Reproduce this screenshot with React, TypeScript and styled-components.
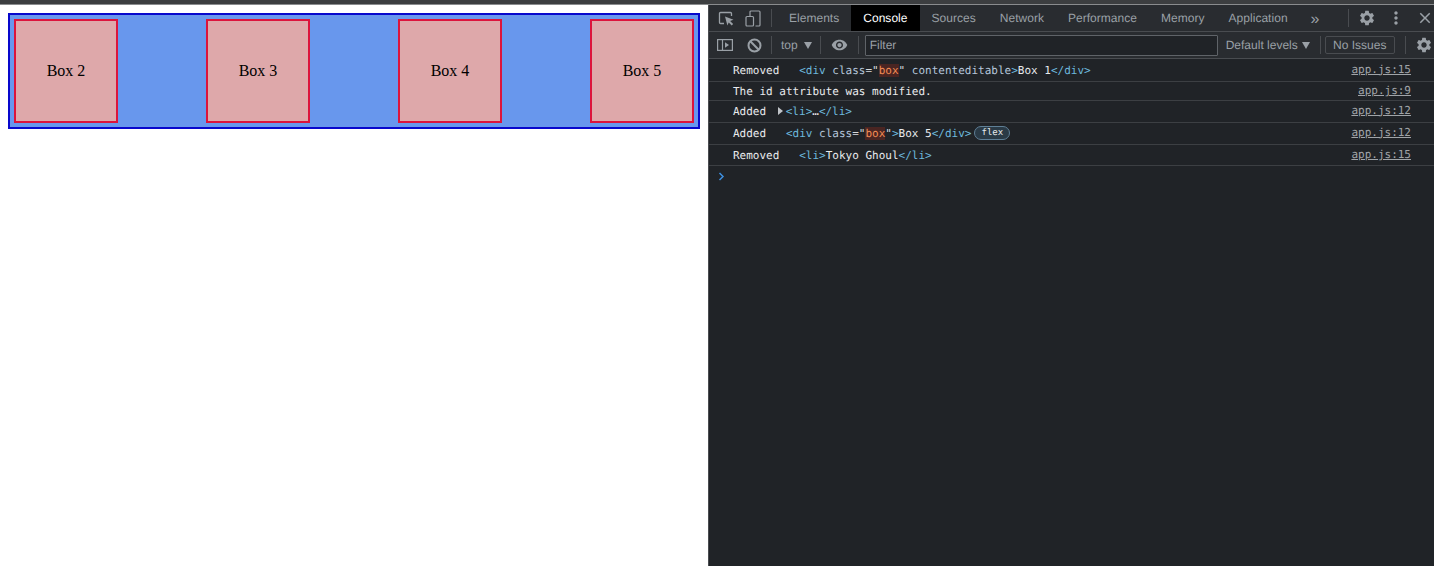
import React from 'react';
import styled, { createGlobalStyle } from 'styled-components';
import { MdClose, MdMoreVert, MdRemoveRedEye, MdSettings } from 'react-icons/md';

const GlobalStyle = createGlobalStyle`
  html, body {
    margin: 0;
    padding: 0;
    height: 100%;
    overflow: hidden;
    background: #fff;
  }
`;

const TABS = ['Elements', 'Console', 'Sources', 'Network', 'Performance', 'Memory', 'Application'];

function Tag({ name, attrs, children }: { name: string; attrs?: React.ReactNode; children?: React.ReactNode }) {
  return (
    <>
      <Styled.TagName>{`<${name}`}</Styled.TagName>
      {attrs}
      <Styled.TagName>{'>'}</Styled.TagName>
      {children}
      <Styled.TagName>{`</${name}>`}</Styled.TagName>
    </>
  );
}

const BoxAttr = () => (
  <>
    <Styled.AttrName> class</Styled.AttrName>
    <Styled.Quote>="</Styled.Quote>
    <Styled.AttrValue>box</Styled.AttrValue>
    <Styled.Quote>"</Styled.Quote>
  </>
);

export default function App() {
  return (
    <>
      <GlobalStyle />
      <Styled.Window>
        <Styled.TopStrip />
        <Styled.Main>
          <Styled.Page>
            <Styled.BoxList>
              {[2, 3, 4, 5].map((n) => (
                <Styled.Box key={n}>Box {n}</Styled.Box>
              ))}
            </Styled.BoxList>
          </Styled.Page>
          <Styled.DevTools>
            <Styled.TabBar>
              <Styled.IconButton $left={9} $width={17}>
                <svg width="17" height="16" viewBox="0 0 17 16" fill="none">
                  <path d="M6 13.5H2.5a1 1 0 0 1-1-1v-9a1 1 0 0 1 1-1h10a1 1 0 0 1 1 1V6" stroke="#9aa0a6" strokeWidth="1.3" />
                  <path d="M7 6.5l8.5 3.2-3.4 1.3 3 3-1.4 1.4-3-3-1.3 3.2z" fill="#9aa0a6" />
                </svg>
              </Styled.IconButton>
              <Styled.IconButton $left={10} $width={16}>
                <svg width="16" height="17" viewBox="0 0 16 17" fill="none" stroke="#9aa0a6" strokeWidth="1.2">
                  <path d="M5 6V2a1 1 0 0 1 1-1h8a1 1 0 0 1 1 1v13a1 1 0 0 1-1 1h-3.5" />
                  <rect x="1" y="6.5" width="7.5" height="9.5" rx="1" />
                </svg>
              </Styled.IconButton>
              <Styled.Separator $left={10} />
              <Styled.Tabs>
                {TABS.map((tab) => (
                  <Styled.Tab key={tab} $active={tab === 'Console'}>
                    {tab}
                  </Styled.Tab>
                ))}
              </Styled.Tabs>
              <Styled.MoreTabs>»</Styled.MoreTabs>
              <Styled.Separator $left={28} />
              <Styled.IconButton $left={9} $width={18}>
                <MdSettings size={18} color="#9aa0a6" />
              </Styled.IconButton>
              <Styled.IconButton $left={10} $width={20}>
                <MdMoreVert size={20} color="#9aa0a6" />
              </Styled.IconButton>
              <Styled.IconButton $left={10} $width={18}>
                <MdClose size={18} color="#9aa0a6" />
              </Styled.IconButton>
            </Styled.TabBar>

            <Styled.ToolBar>
              <Styled.IconButton $left={8} $width={16}>
                <svg width="16" height="14" viewBox="0 0 16 14" fill="none">
                  <rect x="0.6" y="1.6" width="14.8" height="10.8" stroke="#9aa0a6" strokeWidth="1.2" />
                  <path d="M5.5 2v10" stroke="#9aa0a6" strokeWidth="1.2" />
                  <path d="M8 4.2L12 7 8 9.8z" fill="#9aa0a6" />
                </svg>
              </Styled.IconButton>
              <Styled.IconButton $left={13} $width={16}>
                <svg width="15" height="15" viewBox="0 0 15 15" fill="none" stroke="#9aa0a6" strokeWidth="2">
                  <circle cx="7.5" cy="7.5" r="6" />
                  <path d="M3.3 3.3l8.4 8.4" />
                </svg>
              </Styled.IconButton>
              <Styled.Separator $left={9} />
              <Styled.ToolText $left={9}>top</Styled.ToolText>
              <Styled.Caret $left={6} />
              <Styled.Separator $left={8} />
              <Styled.IconButton $left={10} $width={17}>
                <MdRemoveRedEye size={18} color="#9aa0a6" />
              </Styled.IconButton>
              <Styled.Separator $left={10} />
              <Styled.FilterInput placeholder="Filter" readOnly />
              <Styled.ToolText $left={8}>Default levels</Styled.ToolText>
              <Styled.Caret $left={4} />
              <Styled.Separator $left={10} />
              <Styled.IssuesButton>No Issues</Styled.IssuesButton>
              <Styled.Separator $left={10} />
              <Styled.IconButton $left={9} $width={18}>
                <MdSettings size={18} color="#9aa0a6" />
              </Styled.IconButton>
            </Styled.ToolBar>

            <Styled.Row $height={23} $top={1}>
              <Styled.Message>
                {'Removed   '}
                <Tag
                  name="div"
                  attrs={
                    <>
                      <BoxAttr />
                      <Styled.AttrName> contenteditable</Styled.AttrName>
                    </>
                  }
                >
                  Box 1
                </Tag>
              </Styled.Message>
              <Styled.Source>app.js:15</Styled.Source>
            </Styled.Row>
            <Styled.Row $height={19} $top={2}>
              <Styled.Message>The id attribute was modified.</Styled.Message>
              <Styled.Source>app.js:9</Styled.Source>
            </Styled.Row>
            <Styled.Row $height={22}>
              <Styled.Message>
                {'Added '}
                <Styled.Triangle />
                <Tag name="li">…</Tag>
              </Styled.Message>
              <Styled.Source>app.js:12</Styled.Source>
            </Styled.Row>
            <Styled.Row $height={22}>
              <Styled.Message>
                {'Added   '}
                <Tag name="div" attrs={<BoxAttr />}>
                  Box 5
                </Tag>
                <Styled.FlexBadge>flex</Styled.FlexBadge>
              </Styled.Message>
              <Styled.Source>app.js:12</Styled.Source>
            </Styled.Row>
            <Styled.Row $height={21} $top={2}>
              <Styled.Message>
                {'Removed   '}
                <Tag name="li">Tokyo Ghoul</Tag>
              </Styled.Message>
              <Styled.Source>app.js:15</Styled.Source>
            </Styled.Row>
            <Styled.Prompt>
              <svg width="7" height="9" viewBox="0 0 7 9" fill="none">
                <path d="M1.5 1l3.5 3.5L1.5 8" stroke="#3d8fe0" strokeWidth="1.5" />
              </svg>
            </Styled.Prompt>
          </Styled.DevTools>
        </Styled.Main>
      </Styled.Window>
    </>
  );
}

const Styled = {
  Window: styled.div`
    display: flex;
    flex-direction: column;
    width: 1434px;
    height: 566px;
    overflow: hidden;
  `,
  TopStrip: styled.div`
    flex: none;
    height: 5px;
    background: #3c3e40;
    border-bottom: 1px solid #8a8c8e;
    box-sizing: border-box;
  `,
  Main: styled.div`
    flex: 1;
    display: flex;
    min-height: 0;
  `,
  Page: styled.div`
    flex: none;
    width: 708px;
    box-sizing: border-box;
    padding: 8px;
    background: #fff;
  `,
  BoxList: styled.div`
    display: flex;
    justify-content: space-between;
    box-sizing: border-box;
    height: 116px;
    padding: 4px;
    background: #6897ed;
    border: 2px solid #0808cc;
  `,
  Box: styled.div`
    display: flex;
    align-items: center;
    justify-content: center;
    box-sizing: border-box;
    width: 104px;
    height: 104px;
    padding-bottom: 1px;
    background: #dea8aa;
    border: 2px solid #dc143c;
    color: #000;
    font-family: 'Liberation Serif', serif;
    font-size: 16px;
  `,
  DevTools: styled.div`
    flex: 1;
    min-width: 0;
    display: flex;
    flex-direction: column;
    background: #202327;
    border-left: 1px solid #4a4c50;
    font-family: 'Liberation Sans', Arial, sans-serif;
    text-rendering: geometricPrecision;
  `,
  TabBar: styled.div`
    flex: none;
    display: flex;
    align-items: center;
    height: 27px;
    box-sizing: border-box;
    background: #292c30;
    border-bottom: 1px solid #494c50;
  `,
  ToolBar: styled.div`
    flex: none;
    display: flex;
    align-items: center;
    height: 27px;
    box-sizing: border-box;
    background: #292c30;
    border-bottom: 1px solid #494c50;
  `,
  IconButton: styled.span<{ $left: number; $width: number }>`
    flex: none;
    display: flex;
    align-items: center;
    justify-content: center;
    width: ${(p) => p.$width}px;
    margin-left: ${(p) => p.$left}px;
  `,
  Separator: styled.span<{ $left: number }>`
    flex: none;
    width: 1px;
    height: 18px;
    margin-left: ${(p) => p.$left}px;
    background: #494c50;
  `,
  Tabs: styled.div`
    display: flex;
    align-self: stretch;
    margin-left: 5px;
  `,
  Tab: styled.div<{ $active?: boolean }>`
    display: flex;
    align-items: center;
    padding: 0 12px;
    font-size: 12px;
    letter-spacing: 0.03px;
    color: ${(p) => (p.$active ? '#fff' : '#9aa0a6')};
    background: ${(p) => (p.$active ? '#000' : 'transparent')};
  `,
  MoreTabs: styled.span`
    margin-left: 11px;
    width: 10px;
    padding-top: 3px;
    font-size: 16px;
    line-height: 1;
    color: #9aa0a6;
  `,
  ToolText: styled.span<{ $left: number }>`
    flex: none;
    margin-left: ${(p) => p.$left}px;
    font-size: 12px;
    color: #9aa0a6;
  `,
  Caret: styled.span<{ $left: number }>`
    flex: none;
    width: 0;
    height: 0;
    margin-left: ${(p) => p.$left}px;
    border-left: 4px solid transparent;
    border-right: 4px solid transparent;
    border-top: 7px solid #9aa0a6;
  `,
  FilterInput: styled.input`
    flex: none;
    width: 353px;
    height: 21px;
    margin-left: 6px;
    padding: 0 4px;
    box-sizing: border-box;
    background: #202327;
    border: 1px solid #5f6368;
    border-radius: 1px;
    outline: none;
    font-family: 'Liberation Sans', Arial, sans-serif;
    font-size: 12px;
    text-rendering: geometricPrecision;
    color: #e8eaed;
    &::placeholder {
      color: #9aa0a6;
      opacity: 1;
    }
  `,
  IssuesButton: styled.span`
    flex: none;
    display: flex;
    align-items: center;
    justify-content: center;
    box-sizing: border-box;
    width: 70px;
    height: 18px;
    margin-left: 4px;
    border: 1px solid #494c50;
    border-radius: 2px;
    font-size: 12px;
    color: #9aa0a6;
  `,
  Row: styled.div<{ $height: number; $top?: number }>`
    flex: none;
    display: flex;
    align-items: center;
    justify-content: space-between;
    box-sizing: border-box;
    height: ${(p) => p.$height}px;
    padding: ${(p) => p.$top ?? 0}px 23px 1px 24px;
    border-bottom: 1px solid #3c3f43;
    font-family: 'DejaVu Sans Mono', 'Liberation Mono', monospace;
    font-size: 11px;
    color: #e8eaed;
  `,
  Message: styled.span`
    display: flex;
    align-items: center;
    white-space: pre;
  `,
  Source: styled.span`
    padding-bottom: 2px;
    color: #a0a4a8;
    text-decoration: underline;
  `,
  TagName: styled.span`
    color: #6db8dc;
  `,
  AttrName: styled.span`
    color: #b5c6da;
    white-space: pre;
  `,
  Quote: styled.span`
    color: #d8dadd;
  `,
  AttrValue: styled.span`
    color: #f28b54;
    background: #4a2522;
  `,
  Triangle: styled.span`
    flex: none;
    width: 0;
    height: 0;
    margin: 0 3px 0 5px;
    border-top: 4px solid transparent;
    border-bottom: 4px solid transparent;
    border-left: 5px solid #c0c4c8;
  `,
  FlexBadge: styled.span`
    display: flex;
    align-items: center;
    box-sizing: border-box;
    height: 14px;
    margin-left: 3px;
    padding: 0 6px;
    background: #2a3a46;
    border: 1px solid #5f7f96;
    border-radius: 7px;
    font-size: 9px;
    color: #e8eaed;
  `,
  Prompt: styled.div`
    display: flex;
    padding: 6px 0 0 9px;
  `,
};
